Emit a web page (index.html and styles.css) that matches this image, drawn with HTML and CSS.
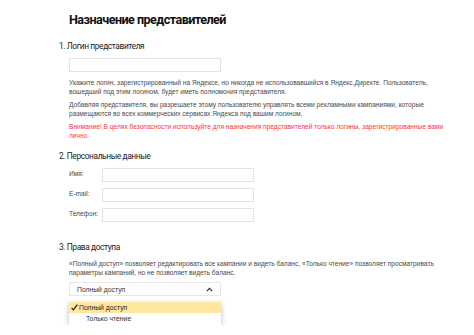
FILE: index.html
```html
<!DOCTYPE html>
<html lang="ru">
<head>
<meta charset="utf-8">
<title>Назначение представителей</title>
<link rel="stylesheet" href="styles.css">
</head>
<body>
<div class="page">
  <h1 class="title">Назначение представителей</h1>

  <h2 class="section">1. Логин представителя</h2>
  <div class="content">
    <div class="input wide"></div>
    <p class="help first">Укажите логин, зарегистрированный на Яндексе, но никогда не использовавшийся в Яндекс.Директе. Пользователь, вошедший под этим логином, будет иметь полномочия представителя.</p>
    <p class="help">Добавляя представителя, вы разрешаете этому пользователю управлять всеми рекламными кампаниями, которые размещаются во всех коммерческих сервисах Яндекса под вашим логином.</p>
    <p class="help warn">Внимание! В целях безопасности используйте для назначения представителей только логины, зарегистрированные вами лично.</p>
  </div>

  <h2 class="section s2">2. Персональные данные</h2>
  <div class="content fields">
    <div class="field"><span class="label">Имя:</span><div class="input"></div></div>
    <div class="field"><span class="label">E-mail:</span><div class="input"></div></div>
    <div class="field"><span class="label">Телефон:</span><div class="input"></div></div>
  </div>

  <h2 class="section s3">3. Права доступа</h2>
  <div class="content">
    <p class="help first3">«Полный доступ» позволяет редактировать все кампании и видеть баланс, «Только чтение» позволяет просматривать параметры кампаний, но не позволяет видеть баланс.</p>
    <div class="select">
      <span>Полный доступ</span>
      <svg class="chev" width="7" height="5" viewBox="0 0 7 5"><path d="M0.8 4.2 L3.5 1.3 L6.2 4.2" fill="none" stroke="#333" stroke-width="1.2"/></svg>
    </div>
    <div class="menu">
      <div class="opt active"><svg class="check" width="7" height="7" viewBox="0 0 7 7"><path d="M0.6 3.8 L2.4 5.9 L6.4 0.6" fill="none" stroke="#111" stroke-width="1.1"/></svg>Полный доступ</div>
      <div class="opt">Только чтение</div>
    </div>
  </div>
</div>
</body>
</html>
```

FILE: styles.css
```css
html, body {
  margin: 0;
  padding: 0;
  background: #fff;
}
body {
  font-family: "Liberation Sans", Arial, sans-serif;
  color: #222;
}
.page {
  padding: 11px 0 0 59px;
}
.title {
  margin: 0 0 0 10px;
  font-family: Roboto, "Liberation Sans", sans-serif;
  font-size: 12.6px;
  line-height: 18px;
  font-weight: bold;
  letter-spacing: -0.55px;
  color: #111;
}
.section {
  margin: 10px 0 0 0;
  font-family: Roboto, "Liberation Sans", sans-serif;
  font-size: 8.4px;
  line-height: 14px;
  font-weight: normal;
  letter-spacing: -0.4px;
  color: #222;
}
.s2 { margin-top: 9px; }
.s3 { margin-top: 18px; }
.content {
  margin-left: 10px;
}
.input {
  box-sizing: border-box;
  width: 152px;
  height: 14px;
  border: 1px solid #e3e3e3;
  background: #fff;
}
.wide { margin-top: 5px; }
.help {
  margin: 4px 0 0 0;
  font-size: 6.6px;
  line-height: 9px;
  color: #4a4a4a;
  width: 380px;
}
.help.first { margin-top: 6px; }
.help.first3 { margin-top: 5px; }
.warn {
  color: #f33;
  margin-top: 4px;
}
.fields {
  margin-top: 5px;
  display: flex;
  flex-direction: column;
  gap: 6px;
}
.field {
  display: flex;
  align-items: flex-start;
}
.label {
  width: 33px;
  font-size: 6.6px;
  line-height: 9px;
  color: #4a4a4a;
  padding-top: 1px;
}
.select {
  box-sizing: border-box;
  margin-top: 5px;
  width: 152px;
  height: 14px;
  border: 1px solid #e6e6e6;
  display: flex;
  align-items: center;
  justify-content: space-between;
  padding: 0 7px 0 7px;
  font-size: 6.8px;
  color: #333;
}
.chev { display: block; }
.menu {
  margin-top: 6px;
  width: 152px;
  box-shadow: 0 2px 6px rgba(0,0,0,0.25);
  background: #fff;
}
.opt {
  height: 12px;
  line-height: 12px;
  font-size: 6.8px;
  color: #333;
  padding-left: 17px;
  display: flex;
  align-items: center;
}
.opt.active {
  background: #ffe7a0;
  height: 11px;
  padding-left: 2px;
  color: #222;
}
.check {
  display: block;
  margin-right: 1px;
}
```
